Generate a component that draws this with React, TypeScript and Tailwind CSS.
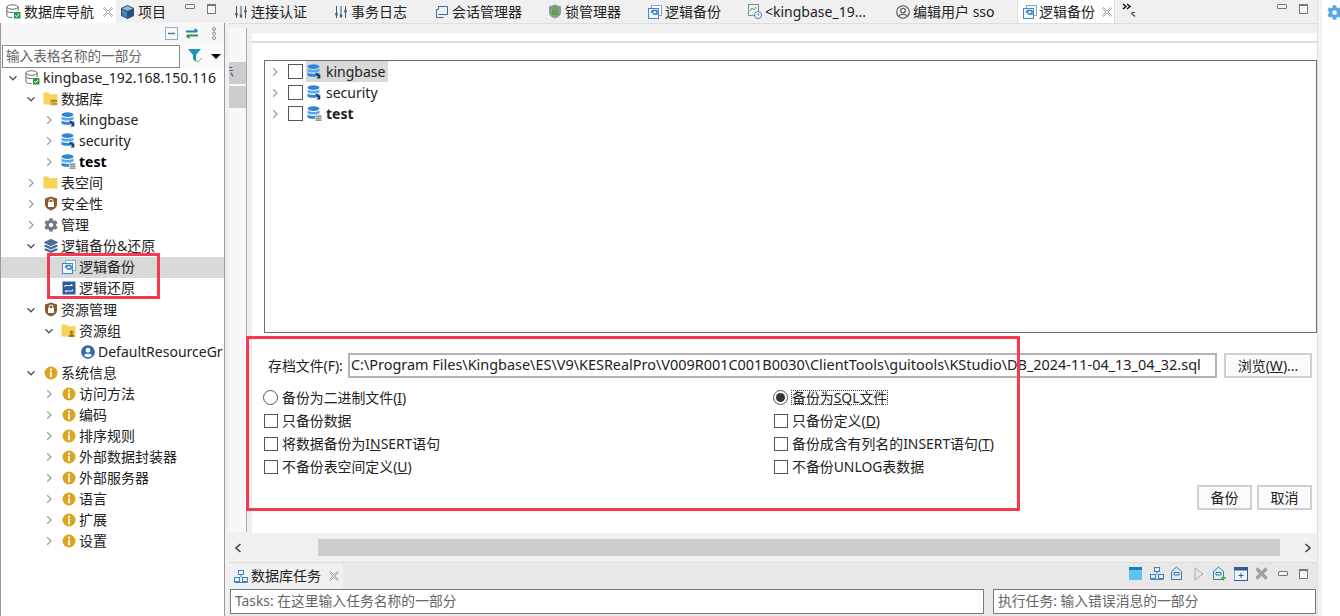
import type { ReactNode } from "react";
import { FaCog, FaLayerGroup, FaUserCircle } from "react-icons/fa";

type TreeItem = {
  depth: 0 | 1 | 2 | 3;
  arrow?: "open" | "closed";
  icon: ReactNode;
  label: string;
  bold?: boolean;
  selected?: boolean;
};

const depthPad = {
  0: "pl-[5px]",
  1: "pl-[23px]",
  2: "pl-[41px]",
  3: "pl-[60px]",
};

function Chevron({ open }: { open?: boolean }) {
  return (
    <svg width="10" height="10" viewBox="0 0 10 10" fill="none">
      {open ? (
        <path d="M1.5 3.2 5 6.8l3.5-3.6" stroke="#505050" strokeWidth="1.3" />
      ) : (
        <path d="M3.2 1.2 7 5 3.2 8.8" stroke="#a0a0a0" strokeWidth="1.3" />
      )}
    </svg>
  );
}

function DbIcon({ badge = "link" }: { badge?: "link" | "list" }) {
  return (
    <svg width="15" height="15" viewBox="0 0 15 15">
      <ellipse cx="6.500" cy="2.600" rx="6" ry="2.300" fill="#2f86d6" />
      <path d="M.5 4.600c1.200 1.700 10.800 1.700 12 0v2.600c-1.200 1.700-10.800 1.700-12 0z" fill="#5aa5e6" />
      <path d="M.5 8.600c1.200 1.700 10.800 1.700 12 0v2.800c-1.200 1.900-10.800 1.900-12 0z" fill="#2f86d6" />
      {badge === "link" ? (
        <path d="M8.500 9.500l1-1 2.800 2.500 1-1V14.500H9.500l1-1.200 1-.3z" fill="#17365f" />
      ) : (
        <>
          <rect x="8" y="9" width="7" height="6" fill="#fff" />
          <path d="M8.500 9.500h6v1.200h-6zm0 2h6v1.200h-6zm0 2h6v1.200h-6z" fill="#777" />
        </>
      )}
    </svg>
  );
}

function ConnIcon() {
  return (
    <svg width="15" height="15" viewBox="0 0 15 15">
      <ellipse cx="6.5" cy="3" rx="5.6" ry="2.2" fill="none" stroke="#666" />
      <path d="M.9 3v8.5c0 1.3 2.5 2.2 5.6 2.2M12.1 3v4" fill="none" stroke="#666" />
      <path d="M1 7c1 1.4 4 1.8 6.5 1.5" fill="none" stroke="#666" />
      <rect x="8" y="8" width="6.5" height="6.5" fill="#2a9a4a" />
      <path d="m9.3 11.2 1.5 1.5 2.4-3" fill="none" stroke="#fff" />
    </svg>
  );
}

function FolderIcon({ badge }: { badge?: "db" | "user" }) {
  return (
    <svg width="15" height="15" viewBox="0 0 15 15">
      <path d="M.5 1.5h5l1.5 1.8h7.500V13.500H.5z" fill="#f7d358" />
      {badge === "db" && (
        <>
          <ellipse cx="10.800" cy="10" rx="3.400" ry="1.400" fill="#b98a28" />
          <path d="M7.400 11v2.500c.6 1.200 6.200 1.200 6.800 0V11c-.6 1.200-6.200 1.200-6.800 0z" fill="#c99a38" />
        </>
      )}
      {badge === "user" && (
        <>
          <circle cx="10.500" cy="9.200" r="1.700" fill="#a5761c" />
          <path d="M7.500 14c0-4 6-4 6 0z" fill="#a5761c" />
        </>
      )}
    </svg>
  );
}

function ShieldIcon({ color = "#8a5a2c", inner = "#fff" }: { color?: string; inner?: string }) {
  return (
    <svg width="14" height="15" viewBox="0 0 14 15">
      <path d="M7 .5 13 2.500v6c0 3-3 5-6 6-3-1-6-3-6-6v-6z" fill={color} />
      <rect x="4" y="6" width="6" height="5" rx=".5" fill={inner} />
      <path d="M5.200 6V4.800a1.800 1.800 0 0 1 3.600 0V6" fill="none" stroke={inner} />
    </svg>
  );
}

function InfoIcon() {
  return (
    <svg width="14" height="14" viewBox="0 0 14 14">
      <circle cx="7" cy="7" r="6.500" fill="#e0a31c" />
      <rect x="6" y="2.700" width="2" height="2" fill="#fff" />
      <rect x="6" y="5.700" width="2" height="5.500" fill="#fff" />
    </svg>
  );
}

function BackupIcon() {
  return (
    <svg width="14" height="14" viewBox="0 0 14 14">
      <rect x="3.500" y=".5" width="10" height="10" fill="#fff" stroke="#7fa9d4" />
      <rect x=".5" y="3.500" width="10" height="10" fill="#f2f7fc" stroke="#4a86c4" />
      <path d="M9 5.500H4.500v2L3 6.500M9 5.500v3.500H5" fill="none" stroke="#2f7cc8" strokeWidth="1.500" />
    </svg>
  );
}

function RestoreIcon() {
  return (
    <svg width="14" height="14" viewBox="0 0 14 14">
      <rect width="13" height="13" y=".5" x=".5" fill="#2d5c9f" />
      <path d="M3 6V4.500h7.500M10.500 4.500 9 3.200M10.500 8.500V10H3M3 10l1.500 1.300" fill="none" stroke="#fff" />
    </svg>
  );
}

function SlidersIcon() {
  return (
    <svg width="12" height="14" viewBox="0 0 12 14">
      <path d="M1.500 1v12M6 1v12M10.500 1v12" stroke="#45586a" />
      <rect x=".3" y="8" width="2.400" height="2.400" fill="#3a5f80" />
      <rect x="4.800" y="9.500" width="2.400" height="2.400" fill="#3a5f80" />
      <rect x="9.300" y="5" width="2.400" height="2.400" fill="#3a5f80" />
    </svg>
  );
}

function CloseX() {
  return (
    <svg width="10" height="10" viewBox="0 0 10 10" fill="none">
      <path
        d="M.5 1.500 1.500.5 5 4 8.500.5l1 1L6 5l3.500 3.500-1 1L5 6 1.500 9.500l-1-1L4 5z"
        stroke="#8a8a8a"
        strokeWidth=".8"
      />
    </svg>
  );
}

function MinBtn() {
  return <div className="h-[5px] w-[10px] rounded-[1px] border border-[#777] bg-[#f5f5f5]" />;
}

function MaxBtn() {
  return <div className="h-[10px] w-[9px] border border-[#777] border-t-2 bg-[#f5f5f5]" />;
}

function TasksIcon({ color = "#3f83c4" }: { color?: string }) {
  return (
    <svg width="14" height="13" viewBox="0 0 14 13" fill="none" stroke={color}>
      <rect x="4.500" y=".5" width="5" height="4" />
      <rect x=".5" y="7.500" width="5" height="4" />
      <rect x="8.500" y="7.500" width="5" height="4" />
      <path d="M7 4.500v3M.5 12.500h13" />
    </svg>
  );
}

function PackageIcon({ plus }: { plus?: boolean }) {
  return (
    <svg width="15" height="15" viewBox="0 0 15 15" fill="none">
      <path d="M1.500 5.500 6.500 1l5 4.500v8h-10z" stroke="#2f7fb0" />
      <path d="M4 6.500h5v2.500H4z" stroke="#2f7fb0" />
      {plus && <path d="M11.500 9.500v5M9 12h5" stroke="#4aa84a" strokeWidth="1.400" />}
    </svg>
  );
}

const tree: TreeItem[] = [
  { depth: 0, arrow: "open", icon: <ConnIcon />, label: "kingbase_192.168.150.116" },
  { depth: 1, arrow: "open", icon: <FolderIcon badge="db" />, label: "数据库" },
  { depth: 2, arrow: "closed", icon: <DbIcon />, label: "kingbase" },
  { depth: 2, arrow: "closed", icon: <DbIcon />, label: "security" },
  { depth: 2, arrow: "closed", icon: <DbIcon badge="list" />, label: "test", bold: true },
  { depth: 1, arrow: "closed", icon: <FolderIcon />, label: "表空间" },
  { depth: 1, arrow: "closed", icon: <ShieldIcon />, label: "安全性" },
  { depth: 1, arrow: "closed", icon: <FaCog size={14} color="#77778c" />, label: "管理" },
  { depth: 1, arrow: "open", icon: <FaLayerGroup size={14} color="#4a6d9c" />, label: "逻辑备份&还原" },
  { depth: 2, icon: <BackupIcon />, label: "逻辑备份", selected: true },
  { depth: 2, icon: <RestoreIcon />, label: "逻辑还原" },
  { depth: 1, arrow: "open", icon: <ShieldIcon />, label: "资源管理" },
  { depth: 2, arrow: "open", icon: <FolderIcon badge="user" />, label: "资源组" },
  { depth: 3, icon: <FaUserCircle size={14} color="#2f68ad" />, label: "DefaultResourceGr" },
  { depth: 1, arrow: "open", icon: <InfoIcon />, label: "系统信息" },
  { depth: 2, arrow: "closed", icon: <InfoIcon />, label: "访问方法" },
  { depth: 2, arrow: "closed", icon: <InfoIcon />, label: "编码" },
  { depth: 2, arrow: "closed", icon: <InfoIcon />, label: "排序规则" },
  { depth: 2, arrow: "closed", icon: <InfoIcon />, label: "外部数据封装器" },
  { depth: 2, arrow: "closed", icon: <InfoIcon />, label: "外部服务器" },
  { depth: 2, arrow: "closed", icon: <InfoIcon />, label: "语言" },
  { depth: 2, arrow: "closed", icon: <InfoIcon />, label: "扩展" },
  { depth: 2, arrow: "closed", icon: <InfoIcon />, label: "设置" },
];

const editorTabs: { label: string; width: string; icon: ReactNode }[] = [
  { label: "连接认证", width: "w-[100px]", icon: <SlidersIcon /> },
  { label: "事务日志", width: "w-[101px]", icon: <SlidersIcon /> },
  {
    label: "会话管理器",
    width: "w-[113px]",
    icon: (
      <svg width="12" height="12" viewBox="0 0 12 12" fill="none" stroke="#3d6f96">
        <path d="M.5 11.500V3.500h2M2.500 3.500V.5h9v8h-9M.5 11.500h7" />
      </svg>
    ),
  },
  { label: "锁管理器", width: "w-[100px]", icon: <ShieldIcon color="#8a9a9a" inner="#5aa83c" /> },
  { label: "逻辑备份", width: "w-[100px]", icon: <BackupIcon /> },
  {
    label: "<kingbase_19...",
    width: "w-[148px]",
    icon: (
      <svg width="14" height="15" viewBox="0 0 14 15" fill="none">
        <rect x=".5" y=".5" width="10" height="11" stroke="#6f8fa8" />
        <path d="M2 7l2-3 2 2 2-3" stroke="#5aa83c" />
        <circle cx="10" cy="11" r="3.500" fill="#fff" stroke="#3f7fa8" />
        <path d="M10 9v2h1.500" stroke="#3f7fa8" />
      </svg>
    ),
  },
  {
    label: "编辑用户 sso",
    width: "w-[126px]",
    icon: (
      <svg width="14" height="14" viewBox="0 0 14 14" fill="none" stroke="#555" strokeWidth="1.100">
        <circle cx="7" cy="7" r="6.300" />
        <circle cx="7" cy="5.500" r="2.300" />
        <path d="M2.800 11.500c1-3 7.400-3 8.400 0" />
      </svg>
    ),
  },
];

function TreeRow({ item, raised }: { item: TreeItem; raised: boolean }) {
  return (
    <div
      className={`flex h-[21px] items-center whitespace-nowrap ${depthPad[item.depth]} ${
        item.selected ? "bg-[#d9d9d9]" : ""
      } ${raised ? "pb-[2px]" : ""}`}
    >
      <span className="flex w-[19px] shrink-0 items-center pl-[2px]">
        {item.arrow && <Chevron open={item.arrow === "open"} />}
      </span>
      <span className="mr-[3px] flex w-[15px] shrink-0 items-center justify-center">{item.icon}</span>
      <span className={item.bold ? "font-bold text-black" : ""}>{item.label}</span>
    </div>
  );
}

function BackupTreeRow({ icon, label, bold, selected }: { icon: ReactNode; label: string; bold?: boolean; selected?: boolean }) {
  return (
    <div className="flex h-[21px] items-center">
      <span className="flex w-[17px] justify-center">
        <Chevron />
      </span>
      <span className="ml-[5px] h-[15px] w-[15px] border border-[#555] bg-white" />
      <span className={`ml-[3px] flex h-[21px] items-center gap-[4px] pr-[3px] pl-[1px] ${selected ? "bg-[#d9d9d9]" : ""}`}>
        {icon}
        <span className={bold ? "font-bold" : ""}>{label}</span>
      </span>
    </div>
  );
}

function CheckOption({ radio, checked, focus, children }: { radio?: boolean; checked?: boolean; focus?: boolean; children: ReactNode }) {
  return (
    <div className="flex h-[23px] items-center">
      {radio ? (
        <span className="flex h-[15px] w-[15px] shrink-0 items-center justify-center rounded-full border border-[#555] bg-white">
          {checked && <span className="h-[9px] w-[9px] rounded-full bg-[#333]" />}
        </span>
      ) : (
        <span className="ml-[1px] h-[14px] w-[14px] shrink-0 border border-[#555] bg-white" />
      )}
      <span className={`ml-[4px] whitespace-nowrap ${focus ? "outline-1 outline-dotted outline-[#444]" : ""}`}>
        {children}
      </span>
    </div>
  );
}

function DialogButton({ width, children }: { width: string; children: ReactNode }) {
  return (
    <div className={`flex h-[25px] ${width} shrink-0 items-center justify-center border-2 border-[#d0d0d0] bg-[#fbfbfb] text-[14px]`}>
      {children}
    </div>
  );
}

export default function App() {
  return (
    <div className="relative flex h-[616px] w-[1340px] overflow-hidden bg-white font-['Noto_Sans','Noto_Sans_CJK_SC',sans-serif] text-[14px] leading-none text-[#222]">
      {/* Navigator */}
      <div className="flex h-full w-[229px] shrink-0 flex-col bg-[#f0f0f0] pr-[4px]">
        <div className="flex h-[23px] items-stretch">
          <div className="flex w-[116px] items-center gap-[3px] bg-white pl-[6px]">
            <ConnIcon />
            <span>数据库导航</span>
            <span className="ml-[6px]">
              <CloseX />
            </span>
          </div>
          <div className="flex flex-1 items-center bg-[#f0f0f0] pl-[5px]">
            <svg width="13" height="14" viewBox="0 0 13 14">
              <path d="M6.500 0 13 3v8l-6.500 3L0 11V3z" fill="#27527f" />
              <path d="M6.500 1 12 3.500 6.500 6 1 3.500z" fill="#8fb8dc" />
              <path d="M1 4.500 6 7v6l-5-2.500z" fill="#4a80b5" />
            </svg>
            <span className="ml-[4px]">项目</span>
            <span className="mb-[10px] ml-[19px]">
              <MinBtn />
            </span>
            <span className="mb-[6px] ml-[12px]">
              <MaxBtn />
            </span>
          </div>
        </div>
        <div className="flex min-h-0 flex-1 flex-col border-x border-x-[#9a9a9a] bg-white">
          <div className="flex h-[21px] items-center justify-end gap-[7px] bg-[#f7f7f7] pr-[7px]">
            <svg width="13" height="13" viewBox="0 0 13 13" fill="none">
              <rect x=".5" y=".5" width="12" height="12" stroke="#8fb0cc" />
              <path d="M3 6.500h7" stroke="#54769a" strokeWidth="1.500" />
            </svg>
            <svg width="14" height="11" viewBox="0 0 14 11" fill="none" strokeWidth="1.800">
              <path d="M1 3.500h11M9.500 1l3 2.500" stroke="#1e88b8" />
              <path d="M13 7.500H2M4.500 10l-3-2.500" stroke="#2f9a3f" />
            </svg>
            <svg className="ml-[5px]" width="6" height="13" viewBox="0 0 6 13" fill="none" stroke="#8a8a8a">
              <circle cx="3" cy="2" r="1.500" />
              <circle cx="3" cy="6.500" r="1.500" />
              <circle cx="3" cy="11" r="1.500" />
            </svg>
          </div>
          <div className="flex h-[24px] items-center bg-[#fafafa] pl-[1px]">
            <div className="flex h-[23px] w-[178px] items-center border border-[#8a8a8a] bg-white pl-[3px] text-[13.6px] text-[#666]">
              输入表格名称的一部分
            </div>
            <svg className="ml-[8px]" width="15" height="14" viewBox="0 0 15 14">
              <path d="M0 0h13L8 6v7L5 10V6z" fill="#1d95b8" />
              <path d="m8 11 2 2 4-4" fill="none" stroke="#6cbf6c" />
            </svg>
            <span className="ml-[8px] h-0 w-0 border-x-[5px] border-t-[5px] border-x-transparent border-t-black" />
          </div>
          <div className="min-h-0 flex-1 overflow-hidden">
            {tree.map((item, i) => (
              <TreeRow key={i} item={item} raised={i < 11} />
            ))}
          </div>
        </div>
      </div>

      {/* Editor area */}
      <div className="flex h-full w-[1089px] shrink-0 flex-col border-r border-r-[#dfdfdf] bg-[#f0f0f0]">
        <div className="flex h-[24px] shrink-0 items-stretch border-b border-b-[#dedede] bg-[#f0f0f0]">
          {editorTabs.map((tab) => (
            <div key={tab.label} className={`flex ${tab.width} items-center gap-[3px] pl-[5px] whitespace-nowrap`}>
              <span className="flex w-[14px] justify-center">{tab.icon}</span>
              <span>{tab.label}</span>
            </div>
          ))}
          <div className="flex w-[98px] items-center gap-[2px] border-x border-x-[#dedede] bg-white pl-[5px]">
            <BackupIcon />
            <span>逻辑备份</span>
            <span className="ml-[5px]">
              <CloseX />
            </span>
          </div>
          <div className="w-[30px] pt-[3px] pl-[7px]">
            <svg width="14" height="15" viewBox="0 0 14 15" fill="none">
              <path d="M1 1l3 2.500L1 6M5 1l3 2.500L5 6" stroke="#000" strokeWidth="1.300" />
              <path d="M13 9.500H10v1.500l3 2.500" stroke="#444" strokeWidth="1.200" />
            </svg>
          </div>
          <div className="ml-auto flex items-start gap-[12px] pt-[4px] pr-[9px]">
            <MinBtn />
            <MaxBtn />
          </div>
        </div>

        <div className="flex min-h-0 flex-1">
          {/* clipped scroller of the outer form */}
          <div className="flex w-[23px] shrink-0">
            <div className="mt-[4px] mb-[1px] flex w-[18px] flex-col border-r border-r-[#a8a8a8] bg-[#f8f8f8] pt-[34px]">
              <div className="flex h-[22px] items-center overflow-hidden bg-[#cdcdcd] text-[12px] text-[#3a5a80]">
                <span className="-ml-[7px]">示</span>
              </div>
              <div className="mt-[2px] h-[22px] bg-[#cdcdcd]" />
            </div>
          </div>

          <div className="flex min-w-0 flex-1 flex-col pt-[9px]">
            <div className="flex h-[500px] flex-col bg-white">
              <div className="h-[10px] shrink-0 border-b-2 border-b-[#dcdcdc]" />
              <div className="flex flex-1 flex-col pt-[17px] pl-[12px]">
                <div className="h-[273px] shrink-0 border border-[#6e6e6e]">
                  <div className="pl-[1px]">
                    <BackupTreeRow icon={<DbIcon />} label="kingbase" selected />
                    <BackupTreeRow icon={<DbIcon />} label="security" />
                    <BackupTreeRow icon={<DbIcon badge="list" />} label="test" bold />
                  </div>
                </div>

                <div className="flex flex-col pr-[5px] text-[13.9px]">
                  <div className="mt-[20px] flex h-[25px] items-center">
                    <span className="ml-[4px] w-[80px] shrink-0 whitespace-nowrap">存档文件(F):</span>
                    <div className="flex h-[25px] w-[869px] shrink-0 items-center overflow-hidden border-2 border-[#b4b4b4] pl-[1px] text-[14.43px] whitespace-nowrap">
                      C:\Program Files\Kingbase\ES\V9\KESRealPro\V009R001C001B0030\ClientTools\guitools\KStudio\DB_2024-11-04_13_04_32.sql
                    </div>
                    <div className="ml-[7px]">
                      <DialogButton width="w-[88px]">
                        浏览(<u>W</u>)...
                      </DialogButton>
                    </div>
                  </div>

                  <div className="mt-[8px] grid w-[1020px] -translate-x-[1px] grid-cols-2">
                    <CheckOption radio>
                      备份为二进制文件(<u>I</u>)
                    </CheckOption>
                    <CheckOption radio checked focus>
                      备份为<u>S</u>QL文件
                    </CheckOption>
                    <CheckOption>只备份数据</CheckOption>
                    <CheckOption>
                      只备份定义(<u>D</u>)
                    </CheckOption>
                    <CheckOption>
                      将数据备份为I<u>N</u>SERT语句
                    </CheckOption>
                    <CheckOption>
                      备份成含有列名的INSERT语句(<u>T</u>)
                    </CheckOption>
                    <CheckOption>
                      不备份表空间定义(<u>U</u>)
                    </CheckOption>
                    <CheckOption>不备份UNLOG表数据</CheckOption>
                  </div>

                  <div className="mt-[7px] flex justify-end gap-[5px]">
                    <DialogButton width="w-[55px]">备份</DialogButton>
                    <DialogButton width="w-[55px]">取消</DialogButton>
                  </div>
                </div>
              </div>
            </div>
          </div>
        </div>

        {/* Horizontal scrollbar */}
        <div className="mt-[6px] flex h-[17px] shrink-0 items-stretch">
          <div className="flex w-[89px] items-center pl-[5px]">
            <svg width="8" height="10" viewBox="0 0 8 10" fill="none">
              <path d="M6.500 1 2 5l4.500 4" stroke="#444" strokeWidth="1.600" />
            </svg>
          </div>
          <div className="w-[962px] bg-[#cdcdcd]" />
          <div className="flex flex-1 items-center justify-end pr-[5px]">
            <svg width="8" height="10" viewBox="0 0 8 10" fill="none">
              <path d="M1.500 1 6 5 1.500 9" stroke="#444" strokeWidth="1.600" />
            </svg>
          </div>
        </div>

        {/* Tasks panel */}
        <div className="mt-[6px] flex h-[54px] shrink-0 flex-col border-t border-t-[#dcdcdc] bg-[#e8e8e8]">
          <div className="flex h-[26px] shrink-0 items-stretch">
            <div className="flex w-[114px] items-center gap-[3px] bg-[#f0f0f0] pl-[5px]">
              <TasksIcon />
              <span>数据库任务</span>
              <span className="ml-[5px]">
                <CloseX />
              </span>
            </div>
            <div className="ml-auto flex items-center pr-[3px] pb-[5px] [&>span]:flex [&>span]:w-[21px] [&>span]:justify-center">
              <span>
                <svg width="13" height="13" viewBox="0 0 13 13">
                  <rect width="13" height="13" fill="#5fc3ee" />
                  <rect width="13" height="3" fill="#1f7fb8" />
                </svg>
              </span>
              <span>
                <TasksIcon />
              </span>
              <span>
                <PackageIcon />
              </span>
              <span>
                <svg width="10" height="14" viewBox="0 0 10 14" fill="none">
                  <path d="M1 1v12l8-6z" stroke="#a8a8a8" />
                </svg>
              </span>
              <span>
                <PackageIcon plus />
              </span>
              <span>
                <svg width="14" height="14" viewBox="0 0 14 14">
                  <rect y=".5" width="13.500" height="13" fill="#eef3f8" stroke="#2f5f98" />
                  <rect width="14" height="3.500" fill="#2f5f98" />
                  <path d="M7 6v5M4.500 8.500h5" stroke="#2f5f98" />
                </svg>
              </span>
              <span>
                <svg width="13" height="13" viewBox="0 0 13 13">
                  <path d="M1.500 1.500 11.500 11.500M11.500 1.500 1.500 11.500" stroke="#a0a0a0" strokeWidth="3.200" />
                </svg>
              </span>
              <span>
                <MinBtn />
              </span>
              <span>
                <MaxBtn />
              </span>
            </div>
          </div>
          <div className="flex h-[25px] shrink-0 gap-[9px] px-[1px] text-[13.8px] text-[#666]">
            <div className="flex w-[754px] items-center border border-[#7a7a7a] bg-white pb-[1px] pl-[4px]">Tasks: 在这里输入任务名称的一部分</div>
            <div className="flex flex-1 items-center border border-[#7a7a7a] bg-white pb-[1px] pl-[4px]">执行任务: 输入错误消息的一部分</div>
          </div>
        </div>
      </div>

      {/* Side strip */}
      <div className="flex flex-1 flex-col items-start border-l-4 border-l-[#f3f3f3] pt-[5px] pl-[5px]">
        <FaCog size={15} color="#5aa6e6" className="shrink-0" />
      </div>

      {/* Red annotation boxes */}
      <div className="pointer-events-none absolute top-[253px] left-[47px] h-[46px] w-[113px] border-[3px] border-[#f8384f]" />
      <div className="pointer-events-none absolute top-[336px] left-[246px] h-[175px] w-[774px] border-[3px] border-[#f8384f]" />
    </div>
  );
}
